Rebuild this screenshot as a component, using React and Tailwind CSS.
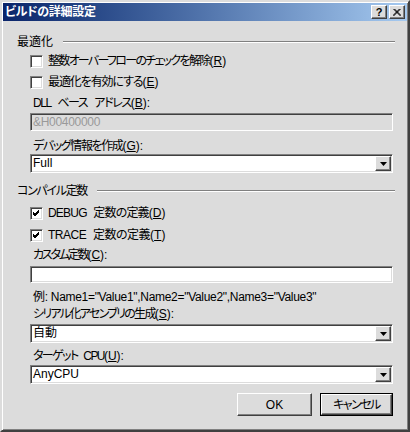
import React from "react";

const sunken =
  "border border-t-[#808080] border-l-[#808080] border-b-white border-r-white shadow-[inset_1px_1px_0_#404040,inset_-1px_-1px_0_#dcdcdc]";
const raised =
  "border border-t-white border-l-white border-b-[#404040] border-r-[#404040] shadow-[inset_-1px_-1px_0_#808080]";

// label text with an underlined access key, e.g. (R)
// tracking only squeezes the japanese part, the (X) keeps normal spacing
const Label = ({ text, keyChar, colon, className = "" }) => (
  <span className="whitespace-nowrap">
    <span className={className}>{text}</span>(
    <span className="underline underline-offset-1">{keyChar}</span>){colon ? ":" : ""}
  </span>
);

const GroupHeader = ({ title, className = "", textClass = "" }) => (
  <div className={`flex items-center h-[14px] -mr-[2px] ${className}`}>
    <span className={`whitespace-nowrap ${textClass}`}>{title}</span>
    <div className="flex-1 ml-[10px] h-[2px] border-t border-t-[#808080] border-b border-b-white" />
  </div>
);

const CheckBox = ({ checked, children, className = "" }) => (
  <div className={`flex items-center h-[14px] ${className}`}>
    <div className={`w-[13px] h-[13px] bg-white ${sunken} flex items-center justify-center`}>
      {checked && (
        <svg width="7" height="7" viewBox="0 0 7 7">
          <path d="M0 2 L2 4 L6 0 M0 3 L2 5 L6 1 M0 4 L2 6 L6 2" stroke="#000" strokeWidth="1" fill="none" />
        </svg>
      )}
    </div>
    <span className="ml-[5px]">{children}</span>
  </div>
);

const Select = ({ value, className = "" }) => (
  <div className={`flex items-center h-[19px] bg-white ${sunken} ${className}`}>
    <span className="flex-1 pl-[2px] leading-[15px]">{value}</span>
    <div className={`w-[16px] h-[15px] mr-[1px] bg-[#dcdcdc] ${raised} flex items-center justify-center`}>
      <svg width="7" height="4" viewBox="0 0 7 4">
        <path d="M0 0 H7 L3.5 4 Z" fill="#000" />
      </svg>
    </div>
  </div>
);

const Button = ({ children, isDefault, className = "" }) => (
  <div className={`${isDefault ? "border border-black" : ""} ${className}`}>
    <div className={`h-full flex items-center justify-center bg-[#dcdcdc] ${raised}`}>{children}</div>
  </div>
);

export default function App() {
  return (
    <div className="w-[410px] h-[432px] bg-[#dcdcdc] p-[1px] border-2 border-t-[#dcdcdc] border-l-[#dcdcdc] border-r-[#404040] border-b-[#404040] shadow-[inset_1px_1px_0_#fff,inset_-1px_-1px_0_#808080] flex flex-col text-[12px] leading-[14px] text-black font-['Liberation_Sans','Noto_Sans_CJK_JP',sans-serif] [font-feature-settings:'palt']">
      {/* title bar */}
      <div className="h-[18px] flex items-center bg-gradient-to-r from-[#0a246a] to-[#a6caf0] pl-[2px] pr-[2px]">
        <span className="flex-1 text-white font-bold text-[12px] tracking-[-0.3px]">ビルドの詳細設定</span>
        <div className={`w-[16px] h-[14px] bg-[#dcdcdc] ${raised} flex items-center justify-center text-[11px] font-bold leading-none`}>?</div>
        <div className={`w-[16px] h-[14px] ml-[2px] bg-[#dcdcdc] ${raised} flex items-center justify-center`}>
          <svg width="8" height="7" viewBox="0 0 8 7">
            <path d="M0.5 0 L7.5 7 M1.5 0 L8 6.5 M7.5 0 L0.5 7 M6.5 0 L0 6.5" stroke="#000" strokeWidth="1" />
          </svg>
        </div>
      </div>

      {/* body */}
      <div className="flex-1 flex flex-col pl-[14px] pr-[14px]">
        <GroupHeader title="最適化" className="mt-[14px]" />
        <div className="flex flex-col pl-[13px]">
          <CheckBox className="mt-[5px]">
            <Label text="整数オーバーフローのチェックを解除" keyChar="R" className="tracking-[-1.7px]" />
          </CheckBox>
          <CheckBox className="mt-[7px]">
            <Label text="最適化を有効にする" keyChar="E" className="tracking-[-1.1px]" />
          </CheckBox>
          <div className="mt-[7px] h-[14px] pl-[3px]">
            <Label text="DLL ベース アドレス" keyChar="B" colon className="tracking-[-1.4px] [word-spacing:5px]" />
          </div>
          <div className={`mt-[3px] h-[18px] bg-[#dcdcdc] ${sunken} pl-[2px] flex items-center text-[#999999] tracking-[-0.3px]`}>
            &amp;H00400000
          </div>
          <div className="mt-[8px] h-[14px] pl-[3px]">
            <Label text="デバッグ情報を作成" keyChar="G" colon className="tracking-[-1.4px]" />
          </div>
          <Select value="Full" className="mt-[1px]" />
        </div>

        <GroupHeader title="コンパイル定数" className="mt-[11px]" textClass="tracking-[-1.3px]" />
        <div className="flex flex-col pl-[13px]">
          <CheckBox checked className="mt-[8px]">
            <span>
              <span className="tracking-[-0.8px] [word-spacing:4px]">DEBUG 定数の定義</span>(<span className="underline underline-offset-1">D</span>)
            </span>
          </CheckBox>
          <CheckBox checked className="mt-[8px]">
            <span>
              <span className="tracking-[-0.5px] [word-spacing:4px]">TRACE 定数の定義</span>(<span className="underline underline-offset-1">T</span>)
            </span>
          </CheckBox>
          <div className="mt-[6px] h-[14px] pl-[3px]">
            <Label text="カスタム定数" keyChar="C" colon className="tracking-[-2.2px]" />
          </div>
          <div className={`mt-[4px] h-[17px] bg-white ${sunken}`} />
          <div className="mt-[7px] h-[14px] pl-[3px] whitespace-nowrap tracking-[-0.3px]">
            例: Name1="Value1",Name2="Value2",Name3="Value3"
          </div>
          <div className="mt-[3px] h-[14px] pl-[3px]">
            <Label text="シリアル化アセンブリの生成" keyChar="S" colon className="tracking-[-1.7px]" />
          </div>
          <Select value="自動" className="mt-[3px]" />
          <div className="mt-[6px] h-[14px] pl-[3px]">
            <Label text="ターゲット CPU" keyChar="U" colon className="tracking-[-1.6px] [word-spacing:4px]" />
          </div>
          <Select value="AnyCPU" className="mt-[2px]" />
        </div>

        <div className="flex justify-end gap-[8px] mt-[9px]">
          <Button className="w-[75px] h-[23px]">OK</Button>
          <Button isDefault className="w-[73px] h-[23px]">
            <span className="tracking-[-1.5px]">キャンセル</span>
          </Button>
        </div>
      </div>
    </div>
  );
}
